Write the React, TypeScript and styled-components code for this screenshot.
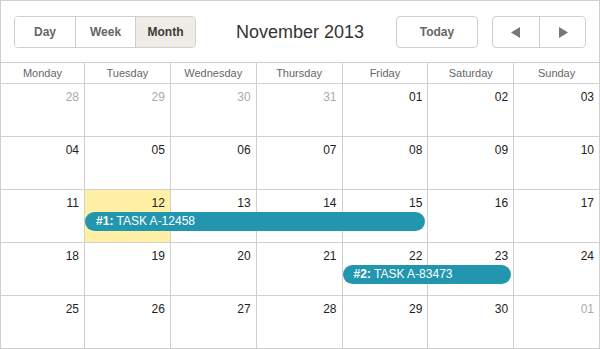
import React from "react";
import styled, { createGlobalStyle } from "styled-components";

const GlobalStyle = createGlobalStyle`
  html, body {
    margin: 0;
    padding: 0;
    background: #fff;
  }
  * {
    box-sizing: border-box;
  }
`;

const weekdays = [
  "Monday",
  "Tuesday",
  "Wednesday",
  "Thursday",
  "Friday",
  "Saturday",
  "Sunday",
];

type Day = { label: string; muted?: boolean; today?: boolean };
type Task = { id: number; name: string; from: number; to: number };

const weeks: { days: Day[]; tasks: Task[] }[] = [
  {
    days: [
      { label: "28", muted: true },
      { label: "29", muted: true },
      { label: "30", muted: true },
      { label: "31", muted: true },
      { label: "01" },
      { label: "02" },
      { label: "03" },
    ],
    tasks: [],
  },
  {
    days: ["04", "05", "06", "07", "08", "09", "10"].map((label) => ({ label })),
    tasks: [],
  },
  {
    days: [
      { label: "11" },
      { label: "12", today: true },
      { label: "13" },
      { label: "14" },
      { label: "15" },
      { label: "16" },
      { label: "17" },
    ],
    tasks: [{ id: 1, name: "TASK A-12458", from: 2, to: 6 }],
  },
  {
    days: ["18", "19", "20", "21", "22", "23", "24"].map((label) => ({ label })),
    tasks: [{ id: 2, name: "TASK A-83473", from: 5, to: 7 }],
  },
  {
    days: [
      { label: "25" },
      { label: "26" },
      { label: "27" },
      { label: "28" },
      { label: "29" },
      { label: "30" },
      { label: "01", muted: true },
    ],
    tasks: [],
  },
];

export default function App() {
  return (
    <>
      <GlobalStyle />
      <Frame>
        <Toolbar>
          <ButtonGroup>
            <ViewButton>Day</ViewButton>
            <ViewButton>Week</ViewButton>
            <ViewButton active>Month</ViewButton>
          </ButtonGroup>
          <Title>November 2013</Title>
          <RightTools>
            <TodayButton>Today</TodayButton>
            <ButtonGroup>
              <ArrowButton aria-label="Previous">
                <svg width="10" height="11" viewBox="0 0 10 11">
                  <polygon points="9,0 9,11 0,5.5" fill="#777" />
                </svg>
              </ArrowButton>
              <ArrowButton aria-label="Next">
                <svg width="10" height="11" viewBox="0 0 10 11">
                  <polygon points="1,0 1,11 10,5.5" fill="#777" />
                </svg>
              </ArrowButton>
            </ButtonGroup>
          </RightTools>
        </Toolbar>
        <Grid>
          <Row>
            {weekdays.map((d) => (
              <WeekdayCell key={d}>{d}</WeekdayCell>
            ))}
          </Row>
          {weeks.map((week, i) => (
            <Row key={i}>
              {week.days.map((day, j) => (
                <DayCell
                  key={j}
                  $today={day.today}
                  style={{ gridColumn: j + 1 }}
                >
                  <DayNumber $muted={day.muted}>{day.label}</DayNumber>
                </DayCell>
              ))}
              {week.tasks.map((task) => (
                <TaskBar
                  key={task.id}
                  style={{ gridColumn: `${task.from} / ${task.to}` }}
                >
                  <strong>#{task.id}:</strong> {task.name}
                </TaskBar>
              ))}
            </Row>
          ))}
        </Grid>
      </Frame>
    </>
  );
}

const Frame = styled.div`
  width: 600px;
  height: 349px;
  border: 1px solid #d0d0d0;
  display: flex;
  flex-direction: column;
  font-family: "Liberation Sans", Arial, Helvetica, sans-serif;
  background: #fff;
`;

const Toolbar = styled.div`
  height: 61px;
  padding: 15px 13px 0;
  display: grid;
  grid-template-columns: 1fr auto 1fr;
  align-items: start;
`;

const ButtonGroup = styled.div`
  display: flex;
  height: 32px;
  border: 1px solid #cfcfcf;
  border-radius: 4px;
  overflow: hidden;
  justify-self: start;
`;

const ViewButton = styled.div<{ active?: boolean }>`
  width: 60px;
  display: flex;
  align-items: center;
  justify-content: center;
  font-size: 12px;
  font-weight: bold;
  color: ${({ active }) => (active ? "#3a3a3a" : "#666")};
  background: ${({ active }) => (active ? "#efebe5" : "#fff")};

  & + & {
    border-left: 1px solid #cfcfcf;
  }
`;

const Title = styled.div`
  font-size: 18px;
  line-height: 32px;
  color: #333;
  letter-spacing: 0;
`;

const RightTools = styled.div`
  display: flex;
  justify-content: flex-end;
  gap: 14px;
`;

const TodayButton = styled.div`
  width: 82px;
  height: 32px;
  border: 1px solid #cfcfcf;
  border-radius: 4px;
  display: flex;
  align-items: center;
  justify-content: center;
  font-size: 12px;
  font-weight: bold;
  color: #666;
`;

const ArrowButton = styled.div`
  width: 46px;
  display: flex;
  align-items: center;
  justify-content: center;

  & + & {
    border-left: 1px solid #cfcfcf;
  }
`;

const Grid = styled.div`
  flex: 1;
  display: flex;
  flex-direction: column;
  gap: 1px;
  background: #d0d0d0;
  border-top: 1px solid #d0d0d0;
`;

const Row = styled.div`
  display: grid;
  grid-template-columns: 83px repeat(6, 1fr);
  column-gap: 1px;

  &:first-child {
    height: 20px;
  }
  &:not(:first-child) {
    height: 52px;
  }
`;

const WeekdayCell = styled.div`
  background: #fff;
  font-size: 11px;
  line-height: 20px;
  color: #666;
  text-align: center;
`;

const DayCell = styled.div<{ $today?: boolean }>`
  grid-row: 1;
  background: ${({ $today }) => ($today ? "#fff0a5" : "#fff")};
  padding: 3px 5px 0 0;
  text-align: right;
`;

const DayNumber = styled.span<{ $muted?: boolean }>`
  font-size: 12px;
  line-height: 14px;
  color: ${({ $muted }) => ($muted ? "#aaa" : "#222")};
`;

const TaskBar = styled.div`
  grid-row: 1;
  align-self: start;
  margin: 22px 2px 0 0;
  height: 19px;
  border-radius: 10px;
  background: #2296ae;
  color: #fff;
  font-size: 12px;
  line-height: 19px;
  padding-left: 11px;
  white-space: nowrap;
  overflow: hidden;
  z-index: 1;

  strong {
    font-weight: bold;
  }
`;
